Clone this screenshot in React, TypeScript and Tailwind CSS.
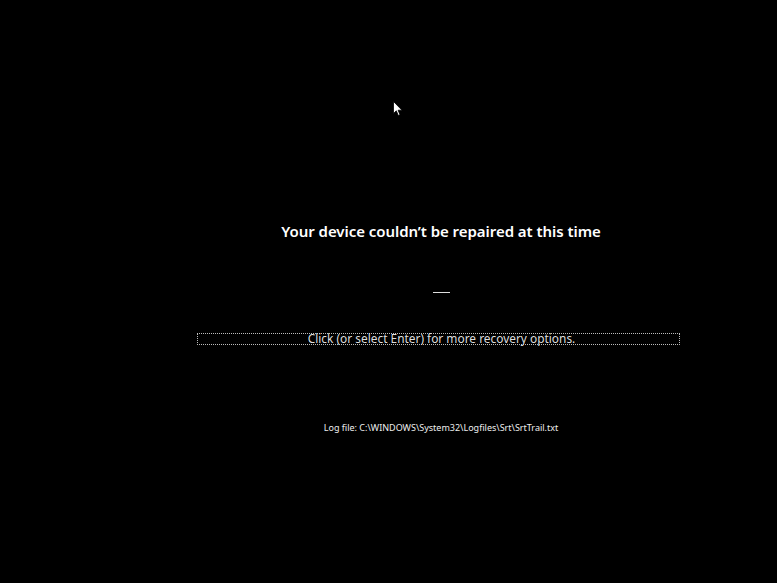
import React from "react";

export default function App() {
  return (
    <div className="relative w-[777px] h-[583px] bg-black overflow-hidden text-white" style={{ fontFamily: '"Noto Sans", "Open Sans", sans-serif' }}>
      <svg className="absolute left-[393px] top-[101px]" width="10" height="16" viewBox="0 0 10 16">
        <path d="M0.5 0.5 L0.5 12.5 L3.3 9.8 L5.3 14.5 L7 13.8 L5.1 9.2 L9 9.2 Z" fill="#fff" stroke="#000" strokeWidth="0.8" />
      </svg>
      <div className="flex flex-col items-center pl-[105px] pt-[220px]">
        <div className="text-[15px] font-semibold leading-[22px] tracking-[-0.05px]">Your device couldn’t be repaired at this time</div>
        <div className="mt-[50px] w-[17px] h-px bg-[#ddd]"></div>
        <div className="mt-[40px] w-[483px] h-[12px] border border-dotted border-[#bbb] flex items-center justify-center pl-[6px] ml-[-5px]">
          <span className="text-[11.9px] leading-none text-[#ddd]">Click (or select Enter) for more recovery options.</span>
        </div>
        <div className="mt-[76px] text-[9px] leading-[14px] text-[#eee]">Log file: C:\WINDOWS\System32\Logfiles\Srt\SrtTrail.txt</div>
      </div>
    </div>
  );
}
